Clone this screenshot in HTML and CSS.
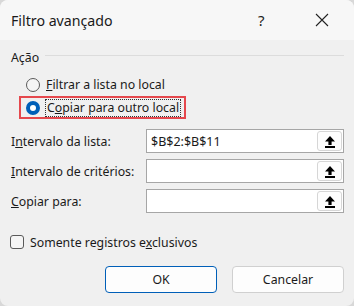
FILE: index.html
```html
<!DOCTYPE html>
<html>
<head>
    <meta charset="utf-8">
    <title>Filtro avançado</title>
    <link rel="stylesheet" href="styles.css">
</head>
<body>
    <div class="dialog">
        <div class="titlebar">
            <span class="title">Filtro avançado</span>
            <span class="help">?</span>
            <span class="close">
                <svg width="14" height="14" viewBox="0 0 14 14"><path d="M1 1 L13 13 M13 1 L1 13" stroke="#222" stroke-width="1.1" fill="none"/></svg>
            </span>
        </div>
        <div class="content">
            <div class="group-header">
                <span>Ação</span>
                <div class="group-line"></div>
            </div>

            <label class="radio-row">
                <span class="radio"></span>
                <span><u>F</u>iltrar a lista no local</span>
            </label>
            <label class="radio-row highlight">
                <span class="radio checked"></span>
                <span class="focus">C<u>o</u>piar para outro local</span>
            </label>

            <div class="form-row first">
                <span class="field-label">I<u>n</u>tervalo da lista:</span>
                <div class="range-input">
                    <span class="range-value">$B$2:$B$11</span>
                    <span class="collapse-btn">
                        <svg width="12" height="13" viewBox="0 0 12 13"><path d="M6 1 L11 6.5 H7.6 V10 H4.4 V6.5 H1 Z" fill="#000"/><rect x="1" y="11" width="10" height="2" fill="#000"/></svg>
                    </span>
                </div>
            </div>
            <div class="form-row">
                <span class="field-label"><u>I</u>ntervalo de critérios:</span>
                <div class="range-input">
                    <span class="range-value"></span>
                    <span class="collapse-btn">
                        <svg width="12" height="13" viewBox="0 0 12 13"><path d="M6 1 L11 6.5 H7.6 V10 H4.4 V6.5 H1 Z" fill="#000"/><rect x="1" y="11" width="10" height="2" fill="#000"/></svg>
                    </span>
                </div>
            </div>
            <div class="form-row">
                <span class="field-label"><u>C</u>opiar para:</span>
                <div class="range-input">
                    <span class="range-value"></span>
                    <span class="collapse-btn">
                        <svg width="12" height="13" viewBox="0 0 12 13"><path d="M6 1 L11 6.5 H7.6 V10 H4.4 V6.5 H1 Z" fill="#000"/><rect x="1" y="11" width="10" height="2" fill="#000"/></svg>
                    </span>
                </div>
            </div>

            <label class="check-row">
                <span class="checkbox"></span>
                <span>Somente registros e<u>x</u>clusivos</span>
            </label>

            <div class="buttons">
                <button class="btn default">OK</button>
                <button class="btn">Cancelar</button>
            </div>
        </div>
    </div>
</body>
</html>
```

FILE: styles.css
```css
html, body {
    margin: 0;
    padding: 0;
}
body {
    background: #d8d8d8;
    font-family: "Noto Sans", "Open Sans", sans-serif;
    font-size: 12.3px;
    color: #1a1a1a;
}
.dialog {
    width: 354px;
    height: 306px;
    background: #f0f0f0;
    border-radius: 8px;
    overflow: hidden;
    box-sizing: border-box;
}
.titlebar {
    height: 40px;
    background: #f7f7f7;
    display: flex;
    align-items: center;
    padding-left: 11px;
}
.title {
    font-size: 14.2px;
    flex: 1;
    color: #1a1a1a;
}
.help {
    font-size: 15px;
    width: 14px;
    margin-right: 43px;
    color: #222;
}
.close {
    display: flex;
    margin-right: 25px;
}
.content {
    padding: 8px 10px 0 11px;
}
.group-header {
    height: 18px;
    display: flex;
    align-items: center;
    gap: 6px;
}
.group-line {
    flex: 1;
    height: 1px;
    background: #dcdcdc;
    margin-top: -3px;
}
.radio-row {
    display: flex;
    align-items: center;
    height: 23px;
    width: fit-content;
    box-sizing: border-box;
    margin-left: 8px;
    padding-left: 7px;
    padding-right: 5px;
    gap: 6px;
}
.radio-row:first-of-type {
    margin-top: 7px;
}
.radio-row.highlight {
    border: 2px solid #e5484d;
    padding-left: 5px;
    padding-right: 4px;
}
.radio {
    width: 14px;
    height: 14px;
    border-radius: 50%;
    border: 1px solid #5a5a5a;
    background: #f5f5f5;
    box-sizing: border-box;
    flex-shrink: 0;
}
.radio.checked {
    border: 4px solid #005fb8;
    background: #fff;
}
.focus {
    outline: 1px dotted #333;
    outline-offset: 0;
    padding: 0 1px;
    line-height: 16px;
}
.form-row {
    display: flex;
    align-items: center;
    height: 30px;
}
.form-row.first {
    margin-top: 7px;
}
.field-label {
    width: 135px;
    flex-shrink: 0;
}
.range-input {
    flex: 1;
    height: 24px;
    background: #fff;
    border: 1px solid #a6a6a6;
    box-sizing: border-box;
    display: flex;
    align-items: center;
    padding-left: 4px;
}
.range-value {
    flex: 1;
    font-size: 12.5px;
}
.collapse-btn {
    width: 25px;
    height: 20px;
    margin-right: 1px;
    border: 1px solid #d6d6d6;
    border-radius: 3px;
    background: #fdfdfd;
    box-sizing: border-box;
    display: flex;
    align-items: center;
    justify-content: center;
}
.check-row {
    display: flex;
    align-items: center;
    gap: 6px;
    height: 16px;
    margin-top: 18px;
}
.checkbox {
    width: 14px;
    height: 14px;
    border: 1px solid #5a5a5a;
    border-radius: 3px;
    background: #f5f5f5;
    box-sizing: border-box;
    margin-left: -1px;
}
.buttons {
    display: flex;
    justify-content: flex-end;
    gap: 15px;
    margin-top: 16px;
}
.btn {
    width: 112px;
    height: 27px;
    background: #fdfdfd;
    border: 1px solid #d0d0d0;
    border-radius: 4px;
    font-family: inherit;
    font-size: 12.3px;
    color: #1a1a1a;
}
.btn.default {
    border-color: #005fb8;
}
```
